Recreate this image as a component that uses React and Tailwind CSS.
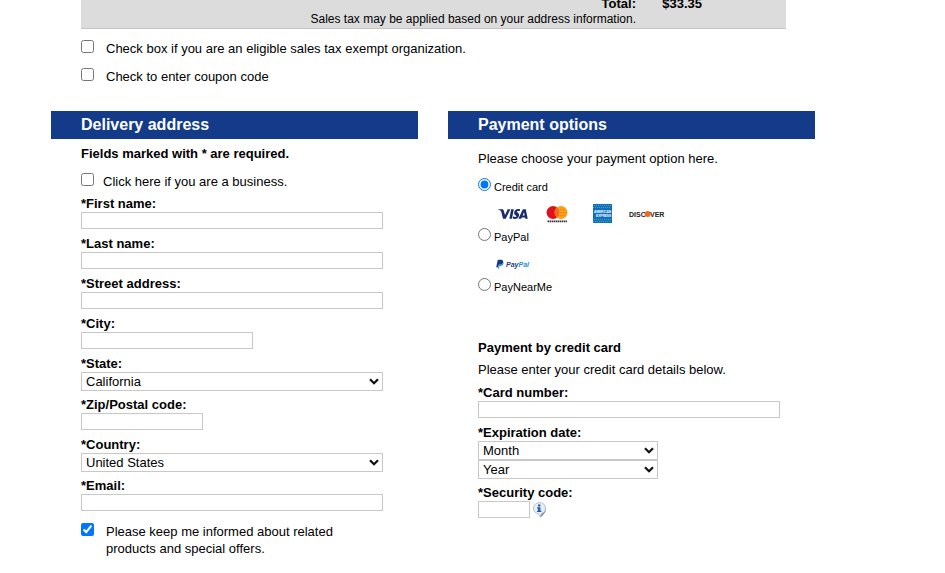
import React, { useState } from 'react';

const Field = ({ id, label, width = "max-w-[302px]", type = "text", children }) => (
  <div className="mb-[6px]">
    <label htmlFor={id} className="block text-[13px] leading-[17px] font-bold">
      *{label}:
    </label>
    <div className="flex h-[17px] items-center">
      <input
        id={id}
        type={type}
        className={`block h-[17px] w-full border border-[#c8c8c8] bg-white px-1 ${width}`}
      />
      {children}
    </div>
  </div>
);

const Select = ({ id, label, options, width = "max-w-[302px]" }) => (
  <div className={`relative ${width}`}>
    <select
      id={id}
      aria-label={label}
      className="block h-[19px] w-full appearance-none border border-[#c8c8c8] bg-white pl-1 pr-5 text-[13px] leading-[17px]"
    >
      {options.map((option) => (
        <option key={option}>{option}</option>
      ))}
    </select>
    <svg viewBox="0 0 10 7" className="pointer-events-none absolute right-1 top-[6px] h-[7px] w-[10px]">
      <path d="M1 1.2 L5 5.2 L9 1.2" fill="none" stroke="#111" strokeWidth="2.2" />
    </svg>
  </div>
);

const SectionTitle = ({ children }) => (
  <h2 className="bg-[#133b8a] px-[30px] text-base leading-7 font-bold text-white">{children}</h2>
);

const VisaLogo = () => (
  <svg viewBox="0 0 32 12" className="h-3 w-[31px]" role="img" aria-label="Visa">
    <path d="M1 1h4.5q1 0 1.3 1l1.5 5L11.1 1h2.7L9 11H6.2L4.3 3.4Q3.4 2 1 1.3z" fill="#1a2b6b" />
    <path d="M14.6 1h2.7l-1.8 10h-2.7z" fill="#1a2b6b" />
    <path
      d="M23.8 1.2l-.4 2c-1.6-.6-3-.5-3 .2 0 .9 2.6 1.200 2.400 3.800-.2 3.200-3.500 4.600-6.600 3.500l.4-2.200c1.600.8 3.400.6 3.500-.2.1-1-2.600-1.200-2.400-3.700.2-3 3.200-4.400 6.100-3.400z"
      fill="#1a2b6b"
    />
    <path d="M27.400 1h2.300l2 10h-2.500l-.3-1.500h-3.300l-.7 1.500h-2.800l4.200-9.200q.3-.8 1.100-.8zm.5 3l-1.400 3.500h2z" fill="#1a2b6b" />
  </svg>
);

const MastercardLogo = () => (
  <svg viewBox="0 0 22 18" className="h-[18px] w-[22px]" role="img" aria-label="Mastercard">
    <circle cx="7" cy="7.5" r="6.5" fill="#e0101f" />
    <circle cx="15" cy="7.5" r="6.5" fill="#f9a01b" />
    <path d="M11 2.400a6.500 6.500 0 0 1 0 10.200a6.500 6.500 0 0 1 0-10.200z" fill="#f26a1b" />
    <path d="M12 4.500h7M12 7.500h9M12 10.500h7" stroke="#e8701a" strokeDasharray="1 1.5" />
    <path d="M1.500 16.400h19.500" stroke="#333" strokeWidth="1.6" strokeDasharray="1.5 .5" />
  </svg>
);

const AmexLogo = () => (
  <svg viewBox="0 0 19 19" className="h-[19px] w-[19px]" role="img" aria-label="American Express">
    <rect width="19" height="19" fill="#0f70b8" />
    <path d="M1 1.500h18M0 3.500h18M1 15.500h18M0 17.500h18" stroke="#4c9bd3" strokeDasharray="1 1" />
    <text x="1" y="9" fontFamily="Liberation Sans, sans-serif" fontSize="3.2" fontWeight="700" fill="#fff">AMERICAN</text>
    <text x="3" y="13" fontFamily="Liberation Sans, sans-serif" fontSize="3.2" fontWeight="700" fill="#fff">EXPRESS</text>
  </svg>
);

const DiscoverLogo = () => (
  <svg viewBox="0 0 36 10" className="h-[10px] w-9" role="img" aria-label="Discover">
    <text x="0" y="7.5" fontFamily="Liberation Sans, sans-serif" fontSize="7" fontWeight="700" fill="#222">DISC</text>
    <circle cx="18.700" cy="5" r="3" fill="#ee6c20" />
    <text x="21" y="7.5" fontFamily="Liberation Sans, sans-serif" fontSize="7" fontWeight="700" fill="#222">VER</text>
  </svg>
);

const PayPalLogo = () => (
  <svg viewBox="0 0 35 10" className="h-[10px] w-[35px]" role="img" aria-label="PayPal">
    <path d="M1.800.8h3.600q2.200.2 1.800 2.400-.6 2.600-3.300 2.600H2.800L2.300 8.200H.2z" fill="#173a78" />
    <path d="M7.200 3q.6.800.2 2-.6 2-3 2h-.9l-.4 2.500H1.600l.3-1.300h.8L3.200 6q3.400 0 4-3z" fill="#2191cf" />
    <text x="10" y="7.500" fontFamily="Liberation Sans, sans-serif" fontSize="7" fontWeight="700" fontStyle="italic" fill="#1d3a7c">
      Pay<tspan fill="#2191cf">Pal</tspan>
    </text>
  </svg>
);

const InfoIcon = () => (
  <svg viewBox="0 0 16 16" className="h-4 w-4" aria-hidden="true">
    <path d="M9 1.500a6.200 6.200 0 0 1 2.600 10.800L8.800 15.600 7.500 13z" fill="#858585" />
    <path d="M7.300.6a6.200 5.700 0 0 1 2.500 10.900L8.200 14.400 6.500 11.900A6.200 5.700 0 0 1 7.300.6z" fill="#e9edf7" stroke="#a9b2c9" strokeWidth=".8" />
    <rect x="6" y="2.500" width="2.400" height="2" fill="#1b5fb4" />
    <path d="M5 5.200h3.400v3.600h1v1.200H5V8.800h1V6.400H5z" fill="#1b5fb4" />
  </svg>
);

const App = () => {
  const [payment, setPayment] = useState('card');
  const [informed, setInformed] = useState(true);

  const radio = (value, label) => (
    <label className="flex items-start gap-[3px] text-[11px] leading-[18px]">
      <input
        type="radio"
        name="payment"
        checked={payment === value}
        onChange={() => setPayment(value)}
        className="h-[13px] w-[13px]"
      />
      {label}
    </label>
  );

  return (
    <div className="overflow-hidden bg-white font-['Liberation_Sans',Arial,sans-serif] text-[13px] leading-[17px] text-black">
      <main className="ml-[51px] w-full max-w-[764px]">
        <div className="ml-[30px] mr-[29px] -mt-1 border-b border-[#c4c4c4] bg-[#dcdcdc] pr-[150px] text-right">
          <div className="flex justify-end font-bold leading-4">
            <span>Total:</span>
            <span className="-mr-[66px] w-[66px]">$33.35</span>
          </div>
          <p className="pt-px pb-[2px] text-xs leading-[13px]">
            Sales tax may be applied based on your address information.
          </p>
        </div>

        <div className="mx-[30px] mt-[11px] space-y-[11px]">
          <label className="flex items-start gap-3">
            <input type="checkbox" className="h-[13px] w-[13px]" />
            Check box if you are an eligible sales tax exempt organization.
          </label>
          <label className="flex items-start gap-3">
            <input type="checkbox" className="h-[13px] w-[13px]" />
            Check to enter coupon code
          </label>
        </div>

        <div className="mt-[26px] grid grid-cols-2 gap-[30px]">
          <section>
            <SectionTitle>Delivery address</SectionTitle>
            <form className="px-[30px]">
              <p className="mt-[6px] font-bold">Fields marked with * are required.</p>
              <label className="mt-[11px] mb-[5px] flex items-start gap-[9px]">
                <input type="checkbox" className="h-[13px] w-[13px]" />
                Click here if you are a business.
              </label>

              <Field id="firstName" label="First name" />
              <Field id="lastName" label="Last name" />
              <Field id="street" label="Street address" />
              <Field id="city" label="City" width="max-w-[172px]" />
              <div className="mb-[5px]">
                <label htmlFor="state" className="block font-bold">*State:</label>
                <Select id="state" label="State" options={["California"]} />
              </div>
              <Field id="zip" label="Zip/Postal code" width="max-w-[122px]" />
              <div className="mb-[5px]">
                <label htmlFor="country" className="block font-bold">*Country:</label>
                <Select id="country" label="Country" options={["United States"]} />
              </div>
              <Field id="email" label="Email" type="email" />

              <label className="mt-3 flex items-start gap-3">
                <input
                  type="checkbox"
                  checked={informed}
                  onChange={(e) => setInformed(e.target.checked)}
                  className="h-[13px] w-[13px] shrink-0"
                />
                <span className="max-w-[250px]">
                  Please keep me informed about related products and special offers.
                </span>
              </label>
            </form>
          </section>

          <section>
            <SectionTitle>Payment options</SectionTitle>
            <form className="px-[30px]">
              <p className="mt-[11px] mb-[11px]">Please choose your payment option here.</p>
              {radio('card', 'Credit card')}
              <div className="flex h-8 items-center pt-[3px] pl-[19px]">
                <VisaLogo />
                <span className="ml-[18px]"><MastercardLogo /></span>
                <span className="ml-[25px]"><AmexLogo /></span>
                <span className="ml-[17px]"><DiscoverLogo /></span>
              </div>
              {radio('paypal', 'PayPal')}
              <div className="flex h-8 items-center pt-1 pl-[18px]">
                <PayPalLogo />
              </div>
              {radio('nearme', 'PayNearMe')}

              <h3 className="mt-[43px] font-bold">Payment by credit card</h3>
              <p className="mt-[5px] mb-[6px]">Please enter your credit card details below.</p>
              <Field id="cardNumber" label="Card number" />
              <div className="mb-[5px]">
                <label htmlFor="month" className="block font-bold">*Expiration date:</label>
                <Select id="month" label="Month" options={["Month"]} width="max-w-[180px]" />
                <Select id="year" label="Year" options={["Year"]} width="max-w-[180px]" />
              </div>
              <Field id="security" label="Security code" width="max-w-[52px]">
                <button type="button" aria-label="Security code help" className="ml-[2px]">
                  <InfoIcon />
                </button>
              </Field>
            </form>
          </section>
        </div>
      </main>
    </div>
  );
};

export default App;
